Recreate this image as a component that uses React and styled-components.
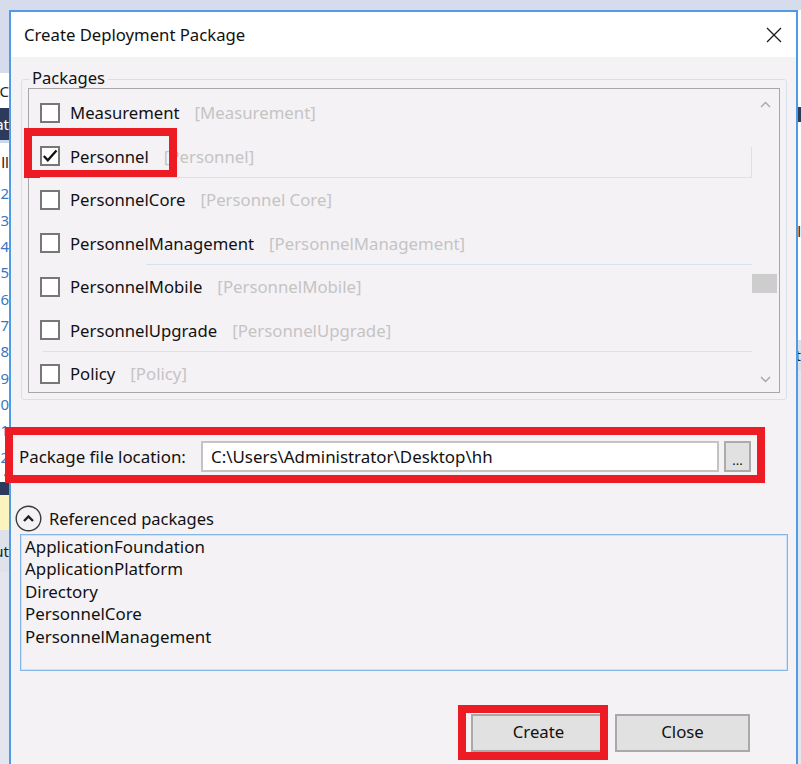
import React from 'react';
import styled, { createGlobalStyle } from 'styled-components';

const GlobalStyle = createGlobalStyle`
  html, body { margin: 0; padding: 0; }
  body {
    width: 801px;
    height: 764px;
    overflow: hidden;
    background: #d6dcec;
    font-family: "Noto Sans", "Open Sans", sans-serif;
    color: #000;
  }
`;

const packages = [
  { name: 'Measurement', tag: '[Measurement]' },
  { name: 'Personnel', tag: '[Personnel]', checked: true, focused: true, lineFrom: 11 },
  { name: 'PersonnelCore', tag: '[Personnel Core]' },
  { name: 'PersonnelManagement', tag: '[PersonnelManagement]', lineFrom: 117 },
  { name: 'PersonnelMobile', tag: '[PersonnelMobile]' },
  { name: 'PersonnelUpgrade', tag: '[PersonnelUpgrade]', lineFrom: 14 },
  { name: 'Policy', tag: '[Policy]' },
];

const referenced = [
  'ApplicationFoundation',
  'ApplicationPlatform',
  'Directory',
  'PersonnelCore',
  'PersonnelManagement',
];

const leftStrip = [
  { h: 73, bg: '#d6dcec' },
  { h: 35, bg: '#ffffff', text: 'r C' },
  { h: 32, bg: '#2c3b5c', fg: '#ffffff', text: 'at' },
  { h: 3, bg: '#c9d8ec' },
  { h: 37, bg: '#ffffff', text: 'll' },
  { h: 290, bg: '#ffffff', fg: '#3a78c0', text: '2 3 4 5 6 7 8 9 0 1 2', column: true },
  { h: 12, bg: '#ffffff', text: '▾', small: true },
  { h: 13, bg: '#2c3b5c' },
  { h: 35, bg: '#fdf3bf' },
  { h: 42, bg: '#dfe2ea', text: 'ut' },
  { grow: true, bg: '#e3e6ef' },
];

const rightStrip = [
  { h: 10, bg: '#d6dcec' },
  { h: 97, bg: '#ffffff' },
  { h: 15, bg: '#2c3b5c' },
  { h: 218, bg: '#ffffff', text: 'l' },
  { h: 30, bg: '#dcdfe8', text: 't' },
  { grow: true, bg: '#e3e6ef' },
];

const Desktop = styled.div`
  display: flex;
  align-items: flex-start;
  width: 801px;
  height: 764px;
  overflow: hidden;
`;

const BehindApp = styled.div`
  width: ${(p) => p.$width}px;
  height: 764px;
  flex-shrink: 0;
  display: flex;
  flex-direction: column;
  overflow: hidden;
`;

const Strip = styled.div`
  height: ${(p) => (p.$grow ? 'auto' : `${p.$h}px`)};
  flex: ${(p) => (p.$grow ? 1 : 'none')};
  background: ${(p) => p.$bg};
  color: ${(p) => p.$fg || '#222'};
  display: flex;
  flex-direction: ${(p) => (p.$column ? 'column' : 'row')};
  justify-content: ${(p) => (p.$column ? 'space-around' : 'flex-end')};
  align-items: ${(p) => (p.$column ? 'flex-end' : 'center')};
  overflow: hidden;
  font-size: ${(p) => (p.$small ? '9px' : '15px')};
  line-height: 1.2;
  white-space: nowrap;
`;

const Dialog = styled.div`
  margin-top: 10px;
  width: 785px;
  height: 760px;
  flex-shrink: 0;
  border: 2px solid #4f9be6;
  border-bottom: none;
  background: #f5f2f6;
  display: flex;
  flex-direction: column;
`;

const TitleBar = styled.div`
  height: 45px;
  flex-shrink: 0;
  background: #ffffff;
  display: flex;
  align-items: center;
  justify-content: space-between;
  padding-left: 13px;
`;

const Title = styled.div`
  font-size: 16.7px;
  color: #111;
`;

const CloseButton = styled.div`
  width: 44px;
  height: 45px;
  display: flex;
  align-items: center;
  justify-content: center;
`;

const GroupBox = styled.fieldset`
  margin: 13px 9px 0 10px;
  padding: 0 6px 6px 6px;
  border: 1px solid #d7e0ea;
  border-radius: 3px;
  min-width: 0;
`;

const Legend = styled.legend`
  position: relative;
  top: -1px;
  margin-left: 1px;
  padding: 0 3px;
  font-size: 16.6px;
  line-height: 18px;
  color: #111;
`;

const ListFrame = styled.div`
  height: 303px;
  border: 1px solid #a8a8a8;
  display: flex;
`;

const Rows = styled.div`
  flex: 1;
  padding-top: 2px;
`;

const Row = styled.div`
  position: relative;
  height: 43.5px;
  box-sizing: border-box;
  display: flex;
  align-items: center;
  padding-left: 11px;

  &::after {
    content: '';
    position: absolute;
    left: ${(p) => (p.$lineFrom != null ? `${p.$lineFrom}px` : '0')};
    right: 0;
    bottom: 0;
    top: ${(p) => (p.$focused ? '12px' : 'auto')};
    height: ${(p) => (p.$focused ? 'auto' : '0')};
    border-bottom: ${(p) => (p.$lineFrom != null ? '1px solid #d3e3f4' : 'none')};
    border-right: ${(p) => (p.$focused ? '1px solid #d3e3f4' : 'none')};
  }
`;

const CheckBox = styled.div`
  width: 16px;
  height: 16px;
  border: 2px solid #777;
  background: #fff;
  flex-shrink: 0;
  display: flex;
  align-items: center;
  justify-content: center;
`;

const PackageName = styled.span`
  margin-left: 10px;
  font-size: 16.7px;
  color: #111;
  white-space: nowrap;
`;

const PackageTag = styled.span`
  margin-left: 15px;
  font-size: 16.8px;
  color: #c4c4c4;
  white-space: nowrap;
`;

const Scrollbar = styled.div`
  width: 27px;
  flex-shrink: 0;
  display: flex;
  flex-direction: column;
`;

const ScrollArrow = styled.div`
  height: ${(p) => p.$h}px;
  flex-shrink: 0;
  display: flex;
  align-items: center;
  justify-content: center;
`;

const Track = styled.div`
  flex: 1;
`;

const Thumb = styled.div`
  width: 25px;
  height: 19px;
  margin-top: ${(p) => p.$offset}px;
  background: #cdcdcd;
`;

const Highlight = styled.div`
  position: absolute;
  left: ${(p) => p.$left}px;
  top: ${(p) => p.$top}px;
  width: ${(p) => p.$width}px;
  height: ${(p) => p.$height}px;
  box-sizing: border-box;
  border: 8px solid #ed1c24;
  pointer-events: none;
`;

const LocationRow = styled.div`
  position: relative;
  margin-top: 41px;
  padding-left: 8px;
  height: 31px;
  display: grid;
  grid-template-columns: 177px 518px 27px;
  column-gap: 5px;
  align-items: stretch;
`;

const FieldLabel = styled.label`
  display: flex;
  align-items: center;
  font-size: 16.9px;
  color: #111;
  white-space: nowrap;
`;

const PathInput = styled.div`
  box-sizing: border-box;
  background: #fff;
  border: 2px solid #c3c3c3;
  display: flex;
  align-items: center;
  padding-left: 8px;
  font-size: 16.9px;
  color: #111;
  white-space: nowrap;
`;

const BrowseButton = styled.div`
  box-sizing: border-box;
  background: #e1e1e1;
  border: 2px solid #ababab;
  display: flex;
  align-items: flex-end;
  justify-content: center;
  font-size: 13px;
  line-height: 20px;
  color: #111;
`;

const ExpanderRow = styled.div`
  margin-top: 33px;
  padding-left: 4px;
  height: 26px;
  display: flex;
  align-items: center;
  gap: 7px;
  font-size: 16.5px;
  color: #111;
`;

const RefList = styled.div`
  margin: 3px 8px 0 9px;
  height: 134px;
  border: 1px solid #84b6e8;
  box-shadow: inset 0 0 0 1px #cde2f6;
  padding: 1px 4px 0;
  font-size: 16.9px;
  line-height: 22.4px;
  color: #111;
`;

const ButtonBar = styled.div`
  margin-top: 43px;
  padding-right: 46px;
  display: flex;
  justify-content: flex-end;
  gap: 9px;
`;

const ButtonWrap = styled.div`
  position: relative;
`;

const DialogButton = styled.button`
  width: 135px;
  height: 38px;
  box-sizing: border-box;
  background: #e1e1e1;
  border: 2px solid #a9a9a9;
  font-family: inherit;
  font-size: 16.8px;
  color: #111;
  padding: 0 0 3px;
`;

function Chevron({ up }) {
  return (
    <svg width="11" height="7" viewBox="0 0 11 7">
      <path
        d={up ? 'M1 6 L5.5 1.5 L10 6' : 'M1 1 L5.5 5.5 L10 1'}
        fill="none"
        stroke="#a6a6a6"
        strokeWidth="1.4"
      />
    </svg>
  );
}

function BehindStrip({ width, blocks }) {
  return (
    <BehindApp $width={width}>
      {blocks.map((b, i) => (
        <Strip key={i} $h={b.h} $grow={b.grow} $bg={b.bg} $fg={b.fg} $column={b.column} $small={b.small}>
          {b.column
            ? b.text.split(' ').map((c, j) => <span key={j}>{c}</span>)
            : b.text && <span style={{ flexShrink: 0 }}>{b.text}</span>}
        </Strip>
      ))}
    </BehindApp>
  );
}

export default function App() {
  return (
    <>
      <GlobalStyle />
      <Desktop>
        <BehindStrip width={9} blocks={leftStrip} />
        <Dialog>
          <TitleBar>
            <Title>Create Deployment Package</Title>
            <CloseButton>
              <svg width="16" height="16" viewBox="0 0 16 16">
                <path d="M1 1 L15 15 M15 1 L1 15" stroke="#1a1a1a" strokeWidth="1.3" />
              </svg>
            </CloseButton>
          </TitleBar>

          <GroupBox>
            <Legend>Packages</Legend>
            <ListFrame>
              <Rows>
                {packages.map((p) => (
                  <Row key={p.name} $lineFrom={p.lineFrom} $focused={p.focused}>
                    <CheckBox>
                      {p.checked && (
                        <svg width="16" height="16" viewBox="0 0 16 16">
                          <path d="M1.8 8 L5.8 12.3 L14.5 2.5" fill="none" stroke="#111" strokeWidth="2.3" />
                        </svg>
                      )}
                    </CheckBox>
                    <PackageName>{p.name}</PackageName>
                    <PackageTag>{p.tag}</PackageTag>
                    {p.checked && <Highlight $left={-5} $top={-6.5} $width={153} $height={50} />}
                  </Row>
                ))}
              </Rows>
              <Scrollbar>
                <ScrollArrow $h={30}>
                  <Chevron up />
                </ScrollArrow>
                <Track>
                  <Thumb $offset={155} />
                </Track>
                <ScrollArrow $h={26}>
                  <Chevron />
                </ScrollArrow>
              </Scrollbar>
            </ListFrame>
          </GroupBox>

          <LocationRow>
            <FieldLabel>Package file location:</FieldLabel>
            <PathInput>C:\Users\Administrator\Desktop\hh</PathInput>
            <BrowseButton>...</BrowseButton>
            <Highlight $left={-6} $top={-14} $width={760} $height={56} />
          </LocationRow>

          <ExpanderRow>
            <svg width="27" height="27" viewBox="0 0 27 27">
              <circle cx="13.5" cy="13.5" r="12.3" fill="none" stroke="#3a3a3a" strokeWidth="1.4" />
              <path d="M9 16 L13.5 11.5 L18 16" fill="none" stroke="#222" strokeWidth="2.4" />
            </svg>
            <span>Referenced packages</span>
          </ExpanderRow>

          <RefList>
            {referenced.map((r) => (
              <div key={r}>{r}</div>
            ))}
          </RefList>

          <ButtonBar>
            <ButtonWrap>
              <DialogButton>Create</DialogButton>
              <Highlight $left={-13} $top={-9} $width={150} $height={55} />
            </ButtonWrap>
            <ButtonWrap>
              <DialogButton>Close</DialogButton>
            </ButtonWrap>
          </ButtonBar>
        </Dialog>
        <BehindStrip width={3} blocks={rightStrip} />
      </Desktop>
    </>
  );
}
